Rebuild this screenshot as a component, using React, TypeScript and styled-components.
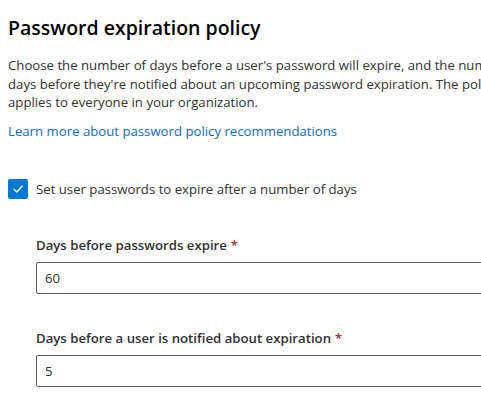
import React from "react";
import styled, { createGlobalStyle } from "styled-components";

const Global = createGlobalStyle`
  html, body { margin: 0; padding: 0; background: #ffffff; overflow: hidden; }
  body { font-family: "Open Sans", "Noto Sans", sans-serif; color: #323130; }
`;

const Page = styled.div`
  width: 481px;
  height: 407px;
  overflow: hidden;
  padding: 14px 0 0 8px;
  box-sizing: border-box;
`;

const Title = styled.h2`
  margin: 0;
  font-size: 19.5px;
  line-height: 28px;
  font-weight: 600;
  color: #000000;
  white-space: nowrap;
`;

const Description = styled.p`
  margin: 14px 0 0 0;
  font-size: 13.2px;
  line-height: 18.5px;
  color: #323130;
  white-space: nowrap;
`;

const LearnLink = styled.a`
  display: block;
  margin-top: 10px;
  font-size: 13.2px;
  line-height: 18px;
  color: #0f6cbd;
  text-decoration: none;
  white-space: nowrap;
`;

const CheckRow = styled.label`
  display: flex;
  align-items: center;
  gap: 8px;
  margin-top: 39px;
  font-size: 13.2px;
  line-height: 20px;
  color: #323130;
`;

const Box = styled.span`
  width: 20px;
  height: 20px;
  border-radius: 2px;
  background: #0078d4;
  display: flex;
  align-items: center;
  justify-content: center;
  flex-shrink: 0;
`;

const Fields = styled.div`
  padding-left: 28px;
  margin-top: 36px;
  display: flex;
  flex-direction: column;
  gap: 34px;
`;

const Field = styled.div`
  display: flex;
  flex-direction: column;
`;

const Label = styled.div`
  font-size: 13.2px;
  line-height: 20px;
  font-weight: 600;
  color: #323130;
  margin-bottom: 7px;
  white-space: nowrap;
`;

const Required = styled.span`
  color: #a4262c;
  margin-left: 4px;
`;

const Input = styled.div`
  width: 480px;
  height: 32px;
  box-sizing: border-box;
  border: 1px solid #605e5c;
  border-radius: 2px;
  padding: 0 8px;
  display: flex;
  align-items: center;
  font-size: 13.2px;
  color: #323130;
`;

function Check() {
  return (
    <svg width="12" height="12" viewBox="0 0 12 12" fill="none">
      <path d="M2 6.3 L4.8 9 L10 3.2" stroke="#ffffff" strokeWidth="1.3" strokeLinecap="round" strokeLinejoin="round" />
    </svg>
  );
}

export default function App() {
  return (
    <>
      <Global />
      <Page>
        <Title>Password expiration policy</Title>
        <Description>
          Choose the number of days before a user's password will expire, and the number of
          <br />
          days before they're notified about an upcoming password expiration. The policy
          <br />
          applies to everyone in your organization.
        </Description>
        <LearnLink href="#">Learn more about password policy recommendations</LearnLink>
        <CheckRow>
          <Box><Check /></Box>
          Set user passwords to expire after a number of days
        </CheckRow>
        <Fields>
          <Field>
            <Label>Days before passwords expire<Required>*</Required></Label>
            <Input>60</Input>
          </Field>
          <Field>
            <Label>Days before a user is notified about expiration<Required>*</Required></Label>
            <Input>5</Input>
          </Field>
        </Fields>
      </Page>
    </>
  );
}
